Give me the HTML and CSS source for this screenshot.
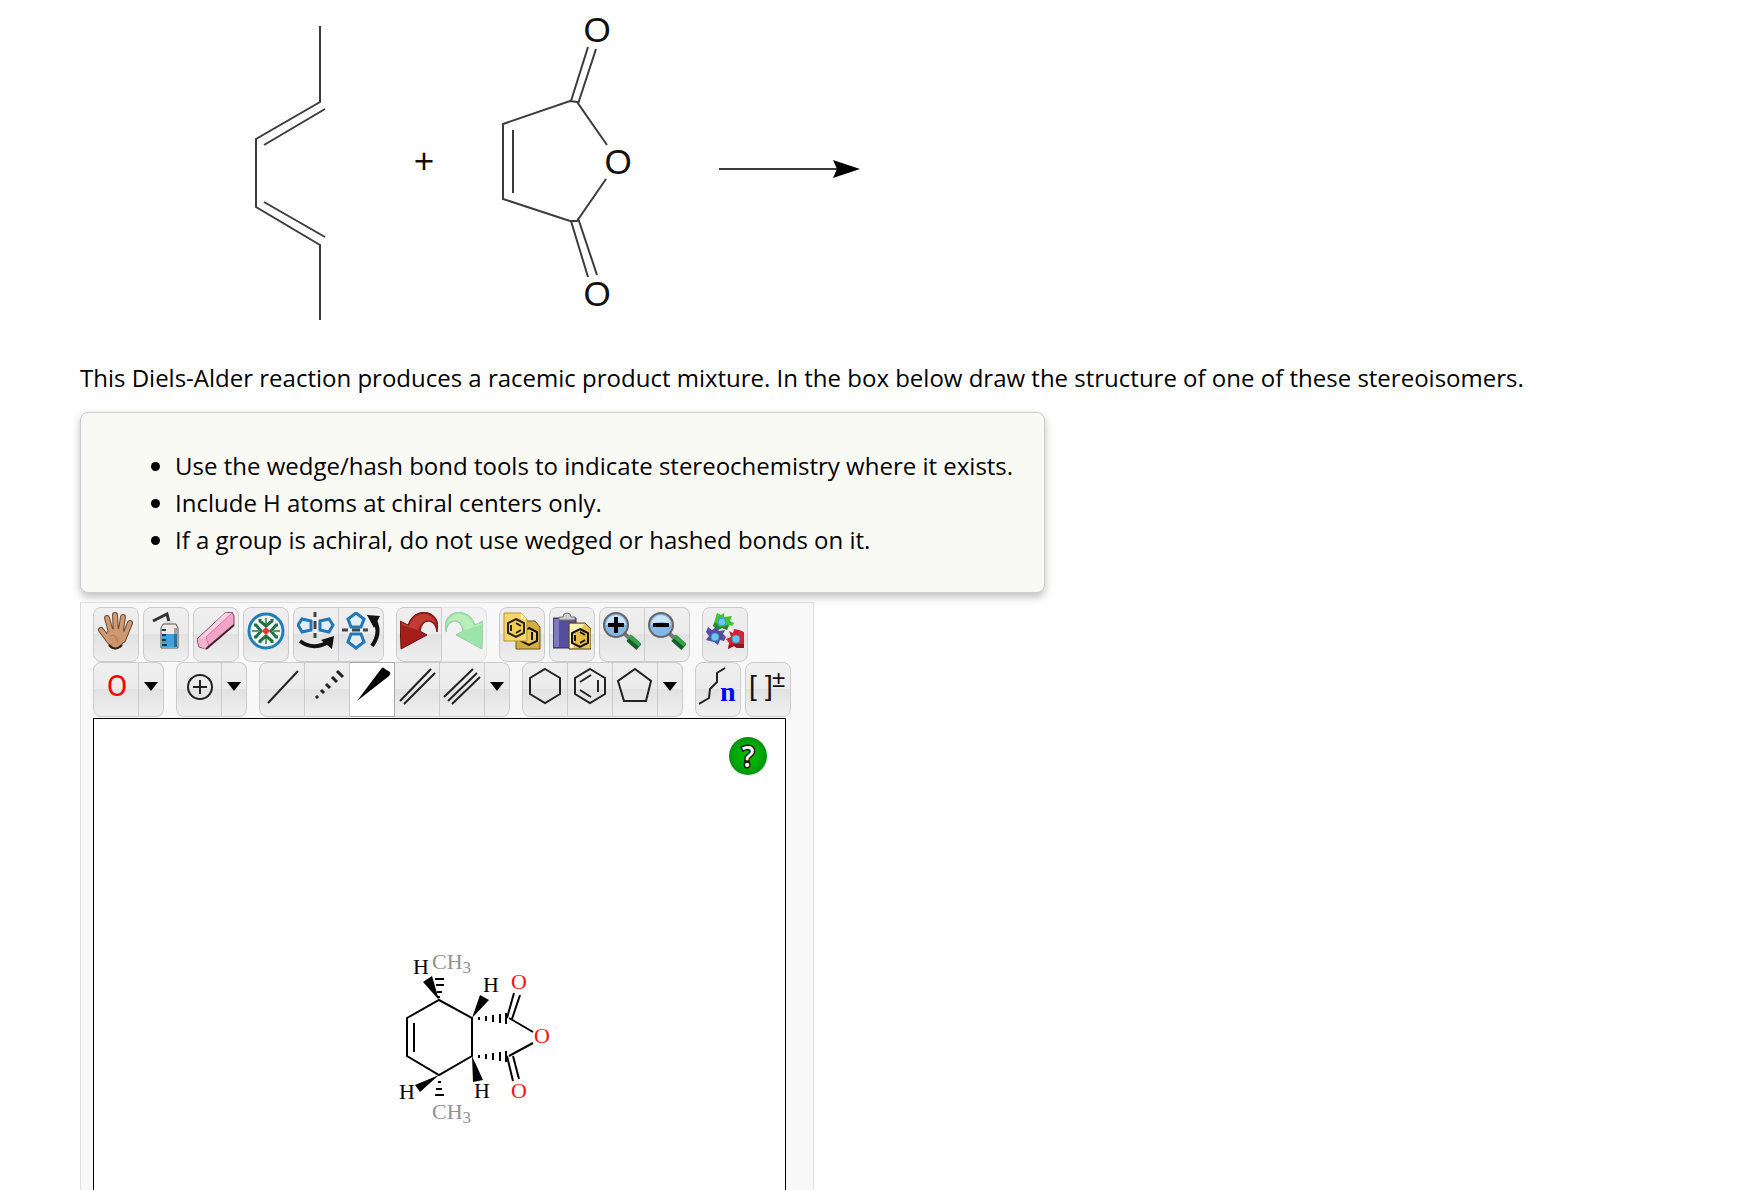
FILE: index.html
```html
<!DOCTYPE html>
<html lang="en">
<head>
	<meta charset="UTF-8">
	<title>Diels-Alder reaction</title>
	<link rel="stylesheet" href="styles.css">
</head>
<body>
<div class="page">
	<svg class="reaction" viewBox="80 0 800 350" role="img" aria-label="Diene plus maleic anhydride">
		<!-- diene -->
		<path d="M320 26V102L256 139V207L320 245V320M325 109L264 145M264 202L325 237"/>
		<text x="424" y="173">+</text>
		<!-- maleic anhydride -->
		<path d="M607 145L577 102L570 101L503 124V199L570 221L577 221L606 179M513 130V193M571 101L588 47M578 104L596 49M571 221L588 277M578 218L597 275"/>
		<text x="597" y="42">O</text>
		<text x="618" y="174">O</text>
		<text x="597" y="306">O</text>
		<path class="arrow" d="M719 169H838"/>
		<path class="head" d="M860 169L833 160L837 169L833 178Z"/>
	</svg>
	<p class="question">This Diels-Alder reaction produces a racemic product mixture. In the box below draw the structure of one of these stereoisomers.</p>
	<div class="hints">
		<ul>
			<li>Use the wedge/hash bond tools to indicate stereochemistry where it exists.</li>
			<li>Include H atoms at chiral centers only.</li>
			<li>If a group is achiral, do not use wedged or hashed bonds on it.</li>
		</ul>
	</div>

	<div class="editor">
		<div class="toolbar">
			<div class="set">
				<button class="btn" aria-label="Move">
					<svg viewBox="0 0 38 38">
						<g stroke="#6b4c37" stroke-width="6" stroke-linecap="round"><path d="M4 18L13 30M10 6L15 24M18 3L19 22M26 5L23 24M33 11L26 28"/></g>
						<path d="M10 20Q19 12 28 20L27 29Q24 36 18 37Q13 35 8 27Z" fill="#c9946c" stroke="#6b4c37"/>
						<g stroke="#cf9a72" stroke-width="4" stroke-linecap="round"><path d="M4 18L13 30M10 6L15 24M18 3L19 22M26 5L23 24M33 11L26 28"/></g>
						<path d="M13 24Q19 21 21 31" fill="none" stroke="#ae7850"/>
						<path d="M12 33Q18 40 25 33" fill="none" stroke="#33241a" stroke-width="2"/>
					</svg>
				</button>
				<button class="btn" aria-label="Clear all">
					<svg viewBox="0 0 38 38">
						<path d="M6 9L20 2L22 10" fill="none" stroke="#333" stroke-width="3"/>
						<path d="M18 9H26V12H18Z" fill="#ddd"/>
						<path d="M16 12H29L31 16V36H14V16Z" fill="#f1e9e2" stroke="#555"/>
						<path d="M15 22H30V35H15Z" fill="#3fa3dd"/>
						<path d="M27 16H30V35H27Z" fill="#000" opacity=".3"/>
						<path d="M15 18H19M15 23H19M15 28H19M15 33H20" stroke="#234" stroke-width="2"/>
					</svg>
				</button>
				<button class="btn" aria-label="Eraser">
					<svg viewBox="0 0 38 38">
						<path d="M0 27L28 1L35 0L37 4V13L9 37L2 35Z" fill="#f3a3c8" stroke="#75435b"/>
						<path d="M1 27L28 1L35 1L9 25Z" fill="#fbd0e3"/>
						<path d="M1 27L9 25L12 34L8 37L2 34Z" fill="#f5b3cd"/>
						<path d="M9 25L35 1M9 25L12 34" stroke="#d778a2"/>
						<path d="M37 13L9 37" stroke="#402530" stroke-width="2"/>
					</svg>
				</button>
				<button class="btn" aria-label="Center">
					<svg viewBox="0 0 38 38">
						<circle cx="19" cy="19" r="17" fill="#f1f1f1" stroke="#1f7db8" stroke-width="3"/>
						<path d="M19 6V12M19 26V32M5 19H12M26 19H33" stroke="#5c9c74" stroke-width="2"/>
						<path d="M13 7V9L19 14L25 9V7M13 31V29L19 24L25 29V31M7 13H9L14 19L9 25H7M31 13H29L24 19L29 25H31" fill="none" stroke="#217346" stroke-width="3"/>
						<path d="M19 15L23 19L19 23L15 19Z" fill="#e33"/>
					</svg>
				</button>
				<div class="split">
					<button class="btn" aria-label="Flip horizontal">
						<svg viewBox="0 0 38 38">
							<g fill="#e4edf4" stroke="#2277b8" stroke-width="3"><path d="M1 13L5 7L14 9V18L5 20ZM36 13L32 7L23 9V18L32 20Z"/></g>
							<path d="M18 0V5M18 9V17M18 21V26" stroke="#444" stroke-width="3"/>
							<path d="M3 29Q16 39 31 30" fill="none" stroke="#111" stroke-width="4"/>
							<path d="M24 28L37 24L35 37Z" fill="#111"/>
						</svg>
					</button>
					<button class="btn" aria-label="Flip vertical">
						<svg viewBox="0 0 38 38">
							<g fill="#e4edf4" stroke="#2277b8" stroke-width="3"><path d="M14 1L22 7L19 15H9L6 7ZM14 36L22 30L19 22H9L6 30Z"/></g>
							<path d="M0 18H6M10 18H18M21 18H26" stroke="#444" stroke-width="3"/>
							<path d="M30 34Q40 20 32 7" fill="none" stroke="#111" stroke-width="4"/>
							<path d="M25 3L38 4L32 16Z" fill="#111"/>
						</svg>
					</button>
				</div>
			</div>
			<div class="split">
				<button class="btn" aria-label="Undo">
					<svg viewBox="0 0 38 38">
						<path d="M0 9L1 37L27 23L20 19Q22 9 29 9Q36 11 37 20Q41 4 26 0Q12 0 8 13Z" fill="#a61e1a" stroke="#641414"/>
						<path d="M9 14Q13 2 25 2Q34 4 36 11Q23 3 18 18L2 13V11Z" fill="#cc4a40" opacity=".7"/>
					</svg>
				</button>
				<button class="btn" aria-label="Redo" disabled>
					<svg viewBox="0 0 38 38">
						<path d="M38 9L37 37L11 23L18 19Q16 9 9 9Q2 11 1 20Q-3 4 12 0Q26 0 30 13Z" fill="#64dc7c" stroke="#6bae78"/>
						<path d="M29 14Q25 2 13 2Q4 4 2 11Q15 3 20 18L36 13V11Z" fill="#a0f098" opacity=".8"/>
					</svg>
				</button>
			</div>
			<div class="set">
				<button class="btn" aria-label="Copy">
					<svg viewBox="0 0 38 38">
						<path d="M13 9H32L37 15V37H13Z" fill="#d4ad42" stroke="#6d571b"/>
						<path d="M26 16L34 20V29L26 33L18 29V20ZM29 20V28" fill="#ebc658" stroke="#111" stroke-width="2"/>
						<path d="M1 1H18L24 7V29H1Z" fill="#f4d66b" stroke="#b99332"/>
						<path d="M18 1V7H24Z" fill="#fff0a8"/>
						<path d="M13 7L21 11V21L13 25L5 21V11ZM8 13V19M13 11L18 14M13 21L18 18" fill="#f4ce51" stroke="#222" stroke-width="2"/>
					</svg>
				</button>
				<button class="btn" aria-label="Paste">
					<svg viewBox="0 0 38 38">
						<path d="M0 6H23V36H0Z" fill="#554d9d" stroke="#302a62"/>
						<path d="M1 7H6V35H1Z" fill="#8179bd"/>
						<path d="M6 8V5H10Q10 1 14 1Q18 1 18 5H22V8Z" fill="#ccc" stroke="#777"/>
						<path d="M16 11H32L38 17V37H16Z" fill="#e4c25d" stroke="#5a4615"/>
						<path d="M17 12H31L20 36H17Z" fill="#fff3b2"/>
						<path d="M27 17L35 21V31L27 35L19 31V21ZM22 23V29M27 20L32 23M27 31L32 28" fill="#e8bc45" stroke="#111" stroke-width="2"/>
					</svg>
				</button>
				<div class="split">
					<button class="btn" aria-label="Zoom in">
						<svg viewBox="0 0 38 38">
							<path d="M21 21L26 26" stroke="#777" stroke-width="4"/>
							<path d="M26 26L36 35" stroke="#145e27" stroke-width="8"/>
							<path d="M26 24L37 33" stroke="#37a44c" stroke-width="4"/>
							<circle cx="13" cy="13" r="12" fill="#83b8e8" stroke="#666" stroke-width="2"/>
							<path d="M3 13A10 10 0 0 1 23 13Q13 7 3 13Z" fill="#cae4fb"/>
							<path d="M13 5V21M5 13H21" stroke="#000" stroke-width="4"/>
						</svg>
					</button>
					<button class="btn" aria-label="Zoom out">
						<svg viewBox="0 0 38 38">
							<path d="M21 21L26 26" stroke="#777" stroke-width="4"/>
							<path d="M26 26L36 35" stroke="#145e27" stroke-width="8"/>
							<path d="M26 24L37 33" stroke="#37a44c" stroke-width="4"/>
							<circle cx="13" cy="13" r="12" fill="#83b8e8" stroke="#666" stroke-width="2"/>
							<path d="M3 13A10 10 0 0 1 23 13Q13 7 3 13Z" fill="#cae4fb"/>
							<path d="M5 13H21" stroke="#000" stroke-width="4"/>
						</svg>
					</button>
				</div>
			</div>
			<button class="btn" aria-label="Add-ons">
				<svg viewBox="0 0 38 38">
					<path d="M11 1L15 3L18 1V5L26 4L24 9L28 11L26 14L23 13L21 18L16 16L12 18L7 14Z" fill="#3fc52f"/>
					<path d="M23 13L21 18L16 16L12 18L7 14L9 10L14 15Z" fill="#26882c"/>
					<path d="M2 15L6 18L10 15L13 19L19 18L17 22L20 25L18 29L14 28L12 33L8 30L0 28L3 24L0 20Z" fill="#554c9e"/>
					<path d="M23 19L27 21L28 17L33 18L38 20V36H31L28 34L22 37L23 31L20 27L25 25Z" fill="#cf2433"/>
					<path d="M38 32V36H31L28 34L22 37L23 33L30 32Z" fill="#94141f"/>
					<g fill="#6cc6ea" stroke="#3c8fd0"><circle cx="16" cy="10" r="4"/><circle cx="9" cy="25" r="4"/><circle cx="30" cy="27" r="4"/></g>
				</svg>
			</button>
		</div>

		<div class="toolbar">
			<div class="split">
				<button class="btn" aria-label="Oxygen"><svg viewBox="0 0 38 38"><text class="atom" x="20" y="29">O</text></svg></button>
				<button class="btn caret" aria-label="More atoms"><svg viewBox="0 0 14 38"><path d="M0 15H14L7 24Z"/></svg></button>
			</div>
			<div class="split">
				<button class="btn" aria-label="Charge"><svg class="line" viewBox="0 0 38 38"><circle cx="20" cy="20" r="12"/><path d="M20 13V27M13 20H27"/></svg></button>
				<button class="btn caret" aria-label="More charges"><svg viewBox="0 0 14 38"><path d="M0 15H14L7 24Z"/></svg></button>
			</div>
			<div class="split">
				<button class="btn" aria-label="Single bond"><svg class="line" viewBox="0 0 38 38"><path d="M5 36L35 4"/></svg></button>
				<button class="btn" aria-label="Hashed bond"><svg class="line" viewBox="0 0 38 38"><path d="M8 29L10 31M13 23L16 26M18 17L22 21M24 10L29 15M29 4L35 10" stroke-width="3"/></svg></button>
				<button class="btn active" aria-label="Wedge bond"><svg viewBox="0 0 38 38"><path d="M4 34L28 2Q30 -1 32 2L37 5Q38 7 36 9Z"/></svg></button>
				<button class="btn" aria-label="Double bond"><svg class="line" viewBox="0 0 38 38"><path d="M2 34L33 2M6 37L37 6"/></svg></button>
				<button class="btn" aria-label="Triple bond"><svg class="line" viewBox="0 0 38 38"><path d="M1 30L30 2M5 34L34 6M9 37L37 10"/></svg></button>
				<button class="btn caret" aria-label="More bonds"><svg viewBox="0 0 14 38"><path d="M0 15H14L7 24Z"/></svg></button>
			</div>
			<div class="split">
				<button class="btn" aria-label="Cyclohexane"><svg class="line" viewBox="0 0 38 38"><path d="M19 2L34 11V27L19 36L4 27V11Z"/></svg></button>
				<button class="btn" aria-label="Benzene"><svg class="line" viewBox="0 0 38 38"><path d="M19 2L34 11V27L19 36L4 27V11ZM27 13V25M9 15L20 8M9 23L20 30"/></svg></button>
				<button class="btn" aria-label="Cyclopentane"><svg class="line" viewBox="0 0 38 38"><path d="M19 2L35 14L30 34H8L2 14Z"/></svg></button>
				<button class="btn caret" aria-label="More rings"><svg viewBox="0 0 14 38"><path d="M0 15H14L7 24Z"/></svg></button>
			</div>
			<div class="set">
				<button class="btn" aria-label="Chain"><svg class="line" viewBox="0 0 38 38"><path d="M26 1L18 6V15L11 22L10 31L0 37"/><text class="count" x="21" y="34">n</text></svg></button>
				<button class="btn" aria-label="Brackets"><svg viewBox="0 0 38 38"><text class="bracket" x="0" y="28">[</text><text class="bracket" x="16" y="28">]</text><text class="sign" x="23" y="20">±</text></svg></button>
			</div>
		</div>

		<div class="canvas">
			<button class="help" aria-label="Help">?</button>
			<svg viewBox="94 719 691 691" role="img" aria-label="Drawn molecule">
				<path class="bond" d="M439 1000L472 1018V1056L439 1075L407 1056V1018ZM414 1023V1052"/>
				<path class="bond" d="M509 1018L533 1032M507 1018L514 993M512 1019L520 995"/>
				<path class="bond" d="M509 1056L533 1043M507 1056L513 1081M513 1056L519 1079"/>
				<path class="wedge" d="M439 1000L423 982L432 976ZM439 1075L415 1085L420 1092ZM472 1018L480 995L489 1000ZM472 1056L473 1082L483 1080Z"/>
				<path class="hash" d="M435 979H444M436 985H444M437 992H442M438 997H440M438 1082H441M436 1089H442M435 1095H444"/>
				<path class="hash" d="M479 1017V1020M486 1016V1021M493 1015V1022M500 1014V1023M506 1013V1024M479 1055V1058M486 1054V1059M493 1053V1060M500 1052V1061M506 1051V1062"/>
				<g class="label">
					<text x="421" y="974">H</text>
					<text x="491" y="992">H</text>
					<text x="482" y="1098">H</text>
					<text x="407" y="1099">H</text>
				</g>
				<g class="label oxygen">
					<text x="519" y="989">O</text>
					<text x="542" y="1043">O</text>
					<text x="519" y="1098">O</text>
				</g>
				<g class="methyl">
					<text x="432" y="969">CH<tspan class="sub" dy="4">3</tspan></text>
					<text x="432" y="1119">CH<tspan class="sub" dy="4">3</tspan></text>
				</g>
			</svg>
		</div>
	</div>
</div>
</body>
</html>
```
FILE: styles.css
```css
html,body{
	padding: 0;
	margin: 0;
	background-color: #fff;
	color: #000;
	font-family: "Open Sans", sans-serif;
	font-size: 24px;
}
.page{
	box-sizing: border-box;
	height: 100vh;
	padding: 0 80px;
	overflow: hidden;
}

/* reaction scheme */
.reaction{
	display: block;
	width: 800px;
	height: 350px;
}
.reaction path{
	fill: none;
	stroke: #3c3c3c;
	stroke-width: 2;
}
.reaction .head{
	fill: #000;
	stroke: none;
}
.reaction text{
	font-family: "Liberation Sans", sans-serif;
	font-size: 35px;
	text-anchor: middle;
	fill: #111;
}

.question{
	margin: 9px 0 15px;
	line-height: 38px;
}
.hints{
	box-sizing: border-box;
	width: fit-content;
	padding: 34px 31px 34px 32px;
	border: solid 1px #ccc;
	border-radius: 8px;
	background-color: #fafaf5;
	box-shadow: 0 4px 8px rgba(0,0,0,.25);
}
.hints ul{
	margin: 0;
	padding-left: 62px;
}
.hints li{line-height: 37px;}

/* editor */
.editor{
	width: 693px;
	margin-top: 9px;
	padding: 4px 27px 12px 12px;
	border: solid 1px #ddd;
	background-color: #f8f8f8;
}
.toolbar{
	display: flex;
	gap: 12px;
	width: max-content;
}
.set{
	display: flex;
	gap: 4px;
}
.split{display: flex;}
.btn{
	box-sizing: border-box;
	width: 46px;
	height: 55px;
	padding: 4px 3px 12px;
	border: solid 1px #ccc;
	border-radius: 8px;
	background: linear-gradient(#efefef, #ebebeb 50%, #e2e2e2 50%, #efefef);
}
.btn svg{
	display: block;
	width: 38px;
	height: 38px;
}
.btn:disabled svg{opacity: .6;}
.btn:disabled{
	border-color: #e4e4e4;
	background: #f2f2f2;
}
.split .btn{border-radius: 0;}
.split .btn:first-child{border-radius: 8px 0 0 8px;}
.split .btn:last-child{border-radius: 0 8px 8px 0;}
.split .btn + .btn{
	width: 45px;
	border-left: none;
}
.split .btn + .caret{
	width: 25px;
	padding: 4px 5px 12px;
}
.caret svg{width: 14px;}
.split .active{
	border-color: #aaa;
	background: #fff;
}
.line{
	fill: none;
	stroke: #222;
	stroke-width: 2;
}
.atom{
	font-family: Roboto, sans-serif;
	font-size: 30px;
	text-anchor: middle;
	fill: #f00;
}
.count{
	font-family: "Liberation Serif", serif;
	font-size: 28px;
	font-weight: bold;
	fill: #00f;
	stroke: none;
}
.bracket, .sign{
	font-family: "Liberation Sans", sans-serif;
	font-size: 28px;
	fill: #111;
}
.sign{font-size: 24px;}

.canvas{
	position: relative;
	box-sizing: border-box;
	margin-top: 1px;
	border: solid 1px #000;
	background-color: #fff;
}
.canvas svg{
	display: block;
	width: 100%;
}
.help{
	position: absolute;
	top: 18px;
	right: 18px;
	width: 38px;
	height: 38px;
	padding: 0;
	border: none;
	border-radius: 50%;
	background: radial-gradient(#00c000, #00a808 50%, #087018);
	color: #fff;
	font-family: "Open Sans", sans-serif;
	font-size: 28px;
	font-weight: 600;
	line-height: 36px;
	-webkit-text-stroke: 3px #111;
	paint-order: stroke fill;
}
.bond, .hash{
	fill: none;
	stroke: #000;
	stroke-width: 2;
}
.label text, .methyl text{
	font-family: "Liberation Serif", serif;
	font-size: 22px;
}
.label text{text-anchor: middle;}
.oxygen text{fill: #f11;}
.methyl text{fill: #989090;}
.methyl .sub{font-size: 17px;}
```
